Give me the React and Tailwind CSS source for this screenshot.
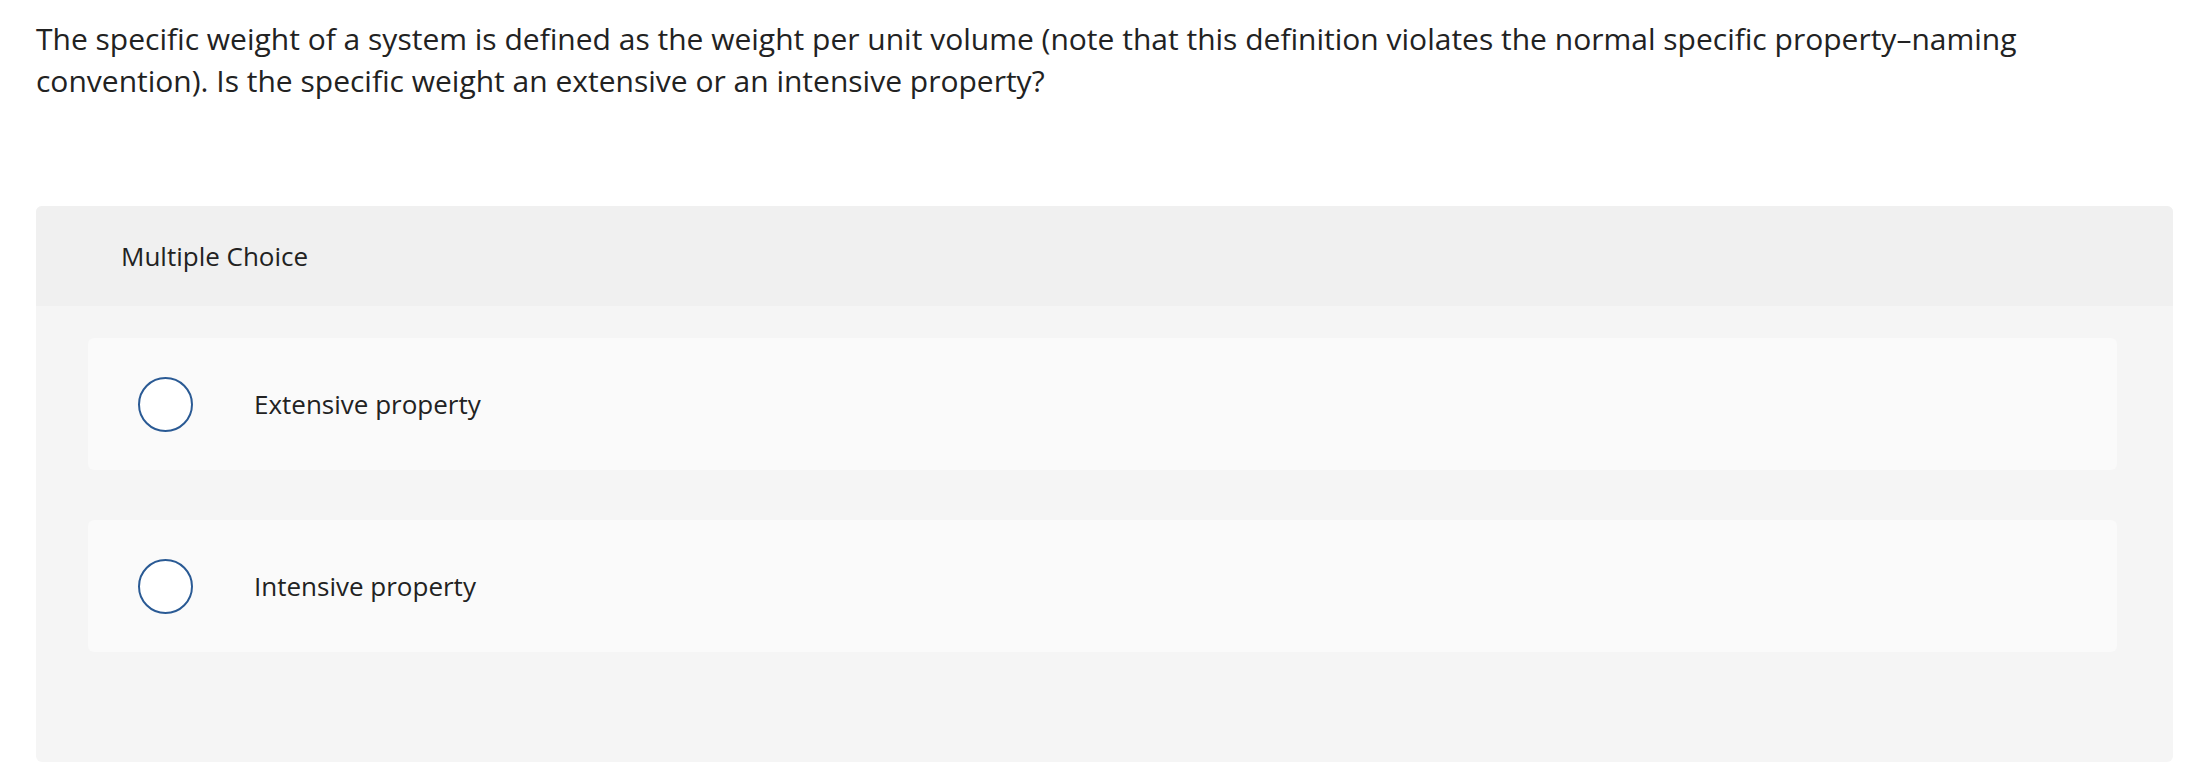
import React from 'react';

const options = ['Extensive property', 'Intensive property'];

const Option = ({ label }) => (
  <div className="flex items-center h-[132px] rounded-md bg-[#fafafa] pl-[50px]">
    <span className="w-[55px] h-[55px] rounded-full border-2 border-[#2a5a94] bg-white shrink-0" />
    <span className="ml-[61px] text-[26px] text-[#222]">{label}</span>
  </div>
);

export default function App() {
  return (
    <div className="bg-white min-h-[778px] px-[36px] pt-[18px] font-['Open_Sans','Liberation_Sans',sans-serif] text-[#222]">
      <p className="text-[30px] leading-[42px] pr-[10px]">
        The specific weight of a system is defined as the weight per unit volume (note that this definition violates the
        normal specific property–naming convention). Is the specific weight an extensive or an intensive property?
      </p>

      <div className="mt-[104px] w-[2137px] rounded-md bg-[#f5f5f5] overflow-hidden">
        <div className="h-[100px] flex items-center bg-[#f0f0f0] pl-[85px]">
          <span className="text-[26px]">Multiple Choice</span>
        </div>
        <div className="flex flex-col gap-[50px] pt-[32px] pb-[110px] pl-[52px] pr-[56px]">
          {options.map((o) => (
            <Option key={o} label={o} />
          ))}
        </div>
      </div>
    </div>
  );
}
